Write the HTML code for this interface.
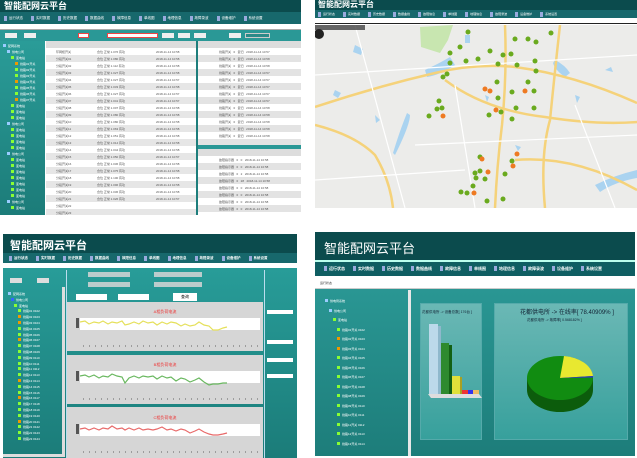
<!DOCTYPE html>
<html><head><meta charset="utf-8">
<style>
*{margin:0;padding:0;box-sizing:border-box}
body{width:637px;height:458px;background:#fff;position:relative;overflow:hidden;font-family:"Liberation Sans","Noto Sans CJK SC",sans-serif}
.a{position:absolute}
.hd{background:#0b4b4d;color:#fff;font-weight:bold;white-space:nowrap}
.nav{background:#17686c;color:#fff;white-space:nowrap;overflow:hidden}
.nav span{display:inline-block;margin-right:8px}
.nav span:before{content:"";display:inline-block;width:3px;height:5px;background:#9ad;margin-right:2px;vertical-align:middle}
.t{font-size:3px;color:#333;white-space:nowrap}
.tree{background:linear-gradient(#2a9c98,#1c7c79)}
.rows{background:repeating-linear-gradient(#fff 0 7px,#e6e6e6 7px 14px)}
.rows2{background:repeating-linear-gradient(#fff 0 7px,#e3e3e3 7px 14px)}
.leaf{font-size:3px;color:#fff;white-space:nowrap;line-height:inherit}
.leaf i{display:inline-block;width:3px;height:3px;background:#8f3;margin-right:2px}
.leaf i.o{background:#e90}
</style></head><body>

<!-- Q1 -->
<div class="a hd" style="left:0;top:0;width:301px;height:12px;font-size:9px;padding-left:4px;line-height:12px">智能配网云平台</div>
<div class="a nav" style="left:0;top:12px;width:301px;height:12px;font-size:3.5px;line-height:12px;padding-left:4px"><span>运行状态</span><span>实时数据</span><span>历史数据</span><span>数据曲线</span><span>故障信息</span><span>单线图</span><span>地理信息</span><span>故障录波</span><span>设备维护</span><span>系统设置</span></div>
<div class="a" style="left:0;top:24px;width:301px;height:6px;background:#fff;border-bottom:1px solid #aaa"></div>
<div class="a" style="left:0;top:30px;width:301px;height:11px;background:#2a9896"></div>
<div class="a" style="left:5px;top:33px;width:12px;height:5px;background:#eee"></div>
<div class="a" style="left:24px;top:33px;width:12px;height:5px;background:#eee"></div>
<div class="a" style="left:78px;top:33px;width:11px;height:5px;background:#fff;border:1px solid #e44"></div>
<div class="a" style="left:107px;top:33px;width:51px;height:5px;background:#fff;border:1px solid #e44"></div>
<div class="a" style="left:162px;top:33px;width:12px;height:5px;background:#eee"></div>
<div class="a" style="left:178px;top:33px;width:12px;height:5px;background:#eee"></div>
<div class="a" style="left:194px;top:33px;width:12px;height:5px;background:#eee"></div>
<div class="a" style="left:229px;top:33px;width:12px;height:5px;background:#eee"></div>
<div class="a" style="left:245px;top:33px;width:25px;height:5px;background:#2a8a88;border:1px solid #ccc"></div>
<div class="a tree" style="left:0;top:41px;width:45px;height:174px;padding:2px 0 0 3px;line-height:6px;overflow:hidden">
<div class="leaf"><i style="background:#9cf"></i>配网系统</div>
<div class="leaf" style="padding-left:4px"><i style="background:#9cf"></i>供电公司</div>
<div class="leaf" style="padding-left:8px"><i></i>变电站</div>
<div class="leaf" style="padding-left:12px"><i class="o"></i>线路01开关</div>
<div class="leaf" style="padding-left:12px"><i></i>线路02开关</div>
<div class="leaf" style="padding-left:12px"><i></i>线路03开关</div>
<div class="leaf" style="padding-left:12px"><i class="o"></i>线路04开关</div>
<div class="leaf" style="padding-left:12px"><i></i>线路05开关</div>
<div class="leaf" style="padding-left:12px"><i></i>线路06开关</div>
<div class="leaf" style="padding-left:12px"><i class="o"></i>线路07开关</div>
<div class="leaf" style="padding-left:8px"><i></i>变电站</div>
<div class="leaf" style="padding-left:8px"><i></i>变电站</div>
<div class="leaf" style="padding-left:8px"><i></i>变电站</div>
<div class="leaf" style="padding-left:4px"><i style="background:#9cf"></i>供电公司</div>
<div class="leaf" style="padding-left:8px"><i></i>变电站</div>
<div class="leaf" style="padding-left:8px"><i></i>变电站</div>
<div class="leaf" style="padding-left:8px"><i></i>变电站</div>
<div class="leaf" style="padding-left:8px"><i></i>变电站</div>
<div class="leaf" style="padding-left:4px"><i style="background:#9cf"></i>供电公司</div>
<div class="leaf" style="padding-left:8px"><i></i>变电站</div>
<div class="leaf" style="padding-left:8px"><i></i>变电站</div>
<div class="leaf" style="padding-left:8px"><i></i>变电站</div>
<div class="leaf" style="padding-left:8px"><i></i>变电站</div>
<div class="leaf" style="padding-left:8px"><i></i>变电站</div>
<div class="leaf" style="padding-left:8px"><i></i>变电站</div>
<div class="leaf" style="padding-left:8px"><i></i>变电站</div>
<div class="leaf" style="padding-left:4px"><i style="background:#9cf"></i>供电公司</div>
<div class="leaf" style="padding-left:8px"><i></i>变电站</div>
</div>
<div class="a rows" style="left:46px;top:41px;width:150px;height:174px;border-top:7px solid #ddd"></div>
<div class="a t" style="left:56px;top:49px;line-height:7px;color:#555">环网柜开关<br>分段开关01<br>分段开关02<br>分段开关03<br>分段开关04<br>分段开关05<br>分段开关06<br>分段开关07<br>分段开关08<br>分段开关09<br>分段开关10<br>分段开关11<br>分段开关12<br>分段开关13<br>分段开关14<br>分段开关15<br>分段开关16<br>分段开关17<br>分段开关18<br>分段开关19<br>分段开关20<br>分段开关21<br>分段开关22<br>分段开关23</div>
<div class="a t" style="left:97px;top:49px;line-height:7px;color:#555">合位 正常 1.076 有功<br>合位 正常 1.080 有功<br>合位 正常 1.112 有功<br>合位 正常 1.027 有功<br>合位 正常 1.027 有功<br>合位 正常 1.033 有功<br>合位 正常 1.027 有功<br>合位 正常 1.041 有功<br>合位 正常 1.007 有功<br>合位 正常 1.080 有功<br>合位 正常 1.080 有功<br>合位 正常 1.063 有功<br>合位 正常 1.051 有功<br>合位 正常 1.014 有功<br>合位 正常 1.044 有功<br>合位 正常 1.050 有功<br>合位 正常 1.036 有功<br>合位 正常 1.075 有功<br>合位 正常 1.100 有功<br>合位 正常 1.096 有功<br>合位 正常 1.036 有功<br>合位 正常 1.026 有功</div>
<div class="a t" style="left:156px;top:49px;line-height:7px;color:#555">2018-11-14 10:58<br>2018-11-14 10:58<br>2018-11-14 10:58<br>2018-11-14 10:58<br>2018-11-14 10:57<br>2018-11-14 10:58<br>2018-11-14 10:57<br>2018-11-14 10:57<br>2018-11-14 10:58<br>2018-11-14 10:58<br>2018-11-14 10:58<br>2018-11-14 10:58<br>2018-11-14 10:58<br>2018-11-14 10:58<br>2018-11-14 10:58<br>2018-11-14 10:57<br>2018-11-14 10:58<br>2018-11-14 10:58<br>2018-11-14 10:58<br>2018-11-14 10:58<br>2018-11-14 10:58<br>2018-11-14 10:57</div>
<div class="a" style="left:196px;top:41px;width:2px;height:174px;background:#1e7e7c"></div>
<div class="a rows2" style="left:198px;top:41px;width:103px;height:104px;border-top:7px solid #ddd"></div>
<div class="a" style="left:198px;top:145px;width:103px;height:4px;background:#2a9896"></div>
<div class="a rows2" style="left:198px;top:149px;width:103px;height:66px;border-top:7px solid #ddd"></div>
<div class="a t" style="left:219px;top:49px;line-height:7px;color:#555">线路开关 &nbsp; 0 &nbsp; 复归 &nbsp; 2018-11-14 10:57<br>线路开关 &nbsp; 0 &nbsp; 复归 &nbsp; 2018-11-14 10:58<br>线路开关 &nbsp; 0 &nbsp; 复归 &nbsp; 2018-11-14 10:58<br>线路开关 &nbsp; 0 &nbsp; 复归 &nbsp; 2018-11-14 10:57<br>线路开关 &nbsp; 0 &nbsp; 复归 &nbsp; 2018-11-14 10:57<br>线路开关 &nbsp; 0 &nbsp; 复归 &nbsp; 2018-11-14 10:57<br>线路开关 &nbsp; 0 &nbsp; 复归 &nbsp; 2018-11-14 10:57<br>线路开关 &nbsp; 0 &nbsp; 复归 &nbsp; 2018-11-14 10:57<br>线路开关 &nbsp; 0 &nbsp; 复归 &nbsp; 2018-11-14 10:58<br>线路开关 &nbsp; 0 &nbsp; 复归 &nbsp; 2018-11-14 10:58<br>线路开关 &nbsp; 0 &nbsp; 复归 &nbsp; 2018-11-14 10:58<br>线路开关 &nbsp; 0 &nbsp; 复归 &nbsp; 2018-11-14 10:58<br>线路开关 &nbsp; 0 &nbsp; 复归 &nbsp; 2018-11-14 10:58</div>
<div class="a t" style="left:219px;top:157px;line-height:7px;color:#555">故障指示器 &nbsp; 0 &nbsp; 0 &nbsp; 2018-11-14 10:58<br>故障指示器 &nbsp; 0 &nbsp; 0 &nbsp; 2018-11-14 10:58<br>故障指示器 &nbsp; 0 &nbsp; 2 &nbsp; 2018-11-14 10:58<br>故障指示器 &nbsp; 0 &nbsp; 28 &nbsp; 2018-11-14 10:58<br>故障指示器 &nbsp; 0 &nbsp; 0 &nbsp; 2018-11-14 10:58<br>故障指示器 &nbsp; 0 &nbsp; 0 &nbsp; 2018-11-14 10:58<br>故障指示器 &nbsp; 0 &nbsp; 0 &nbsp; 2018-11-14 10:58<br>故障指示器 &nbsp; 0 &nbsp; 0 &nbsp; 2018-11-14 10:58</div>

<!-- Q2 map -->
<div class="a hd" style="left:315px;top:0;width:322px;height:10px;font-size:8px;padding-left:3px;line-height:10px">智能配网云平台</div>
<div class="a nav" style="left:315px;top:10px;width:322px;height:8px;font-size:3px;line-height:8px;padding-left:3px"><span>运行状态</span><span>实时数据</span><span>历史数据</span><span>数据曲线</span><span>故障信息</span><span>单线图</span><span>地理信息</span><span>故障录波</span><span>设备维护</span><span>系统设置</span></div>
<div class="a" style="left:315px;top:18px;width:322px;height:6px;background:#fff;border-bottom:1px solid #222"></div>
<svg class="a" style="left:315px;top:25px" width="322" height="183" viewBox="0 0 322 183">
<rect width="322" height="183" fill="#ececea"/>
<path d="M105 2 L138 0 L133 15 L125 28 L106 22Z" fill="#c8e6b0"/>
<path d="M110 45 Q125 38 135 32 L140 40 Q125 50 112 52Z" fill="#aad3f0"/>
<path d="M240 35 Q250 40 255 48 L250 52 Q240 45 238 38Z" fill="#aad3f0"/>
<path d="M80 130 Q95 100 95 90 L92 88 Q85 105 78 128Z" fill="#aad3f0"/>
<path d="M280 160 Q300 150 322 145 L322 153 Q300 157 285 167Z" fill="#aad3f0"/>
<path d="M40 20 l8 4 -2 6 -8 -3z M20 65 l6 3 -3 5 -5 -3z M150 10 l5 0 0 8 -5 0z M60 90 l5 5 -4 3z M200 120 l6 2 -3 4z M170 70 l4 2 -2 5z M260 70 l5 2 -3 6z M290 45 l6 -3 2 5z" fill="#aad3f0"/>
<g fill="none" stroke="#f5d27a" stroke-width="2.5">
<path d="M0 82 Q60 62 120 48 Q160 38 200 42 Q260 50 322 78"/>
<path d="M245 0 Q240 45 235 95 Q225 130 230 183"/>
<path d="M190 0 Q192 50 187 100 Q182 140 180 183"/>
<path d="M0 100 Q40 110 60 130 Q75 155 78 183"/>
<path d="M200 135 Q260 130 322 165"/>
<path d="M130 55 Q170 85 230 92 Q280 100 322 97"/>
</g>
<g fill="none" stroke="#fff" stroke-width="1.2">
<path d="M0 50 L322 30 M40 0 L90 183 M140 60 L160 183 M260 80 L300 183 M100 120 L322 110 M0 155 L150 145"/>
</g>
<g fill="#6aaa1e">
<circle cx="153" cy="7" r="2.5"/><circle cx="200" cy="14" r="2.5"/><circle cx="213" cy="14" r="2.5"/><circle cx="221" cy="17" r="2.5"/><circle cx="236" cy="8" r="2.5"/><circle cx="145" cy="22" r="2.5"/><circle cx="175" cy="26" r="2.5"/><circle cx="135" cy="28" r="2.5"/><circle cx="188" cy="30" r="2.5"/><circle cx="196" cy="29" r="2.5"/><circle cx="151" cy="36" r="2.5"/><circle cx="163" cy="34" r="2.5"/><circle cx="183" cy="39" r="2.5"/><circle cx="202" cy="40" r="2.5"/><circle cx="220" cy="36" r="2.5"/><circle cx="221" cy="46" r="2.5"/><circle cx="135" cy="38" r="2.5"/><circle cx="128" cy="52" r="2.5"/><circle cx="132" cy="49" r="2.5"/><circle cx="182" cy="57" r="2.5"/><circle cx="213" cy="57" r="2.5"/><circle cx="197" cy="67" r="2.5"/><circle cx="219" cy="66" r="2.5"/><circle cx="183" cy="73" r="2.5"/><circle cx="124" cy="76" r="2.5"/><circle cx="122" cy="84" r="2.5"/><circle cx="127" cy="83" r="2.5"/><circle cx="114" cy="91" r="2.5"/><circle cx="174" cy="90" r="2.5"/><circle cx="186" cy="87" r="2.5"/><circle cx="201" cy="83" r="2.5"/><circle cx="219" cy="83" r="2.5"/><circle cx="197" cy="94" r="2.5"/><circle cx="165" cy="132" r="2.5"/><circle cx="197" cy="136" r="2.5"/><circle cx="160" cy="148" r="2.5"/><circle cx="165" cy="146" r="2.5"/><circle cx="190" cy="149" r="2.5"/><circle cx="161" cy="153" r="2.5"/><circle cx="146" cy="167" r="2.5"/><circle cx="152" cy="168" r="2.5"/><circle cx="158" cy="161" r="2.5"/><circle cx="172" cy="176" r="2.5"/><circle cx="188" cy="174" r="2.5"/><circle cx="170" cy="154" r="2.5"/>
</g>
<g fill="#ee7a22">
<circle cx="170" cy="64" r="2.5"/><circle cx="175" cy="66" r="2.5"/><circle cx="210" cy="66" r="2.5"/><circle cx="181" cy="85" r="2.5"/><circle cx="128" cy="91" r="2.5"/><circle cx="202" cy="129" r="2.5"/><circle cx="167" cy="134" r="2.5"/><circle cx="198" cy="141" r="2.5"/><circle cx="173" cy="147" r="2.5"/><circle cx="159" cy="168" r="2.5"/>
</g>
<rect x="0" y="0" width="50" height="5" fill="#444" opacity=".8"/>
<circle cx="4" cy="9" r="5" fill="#222"/>
</svg>

<!-- Q3 -->
<div class="a" style="left:3px;top:234px;width:294px;height:224px;background:linear-gradient(#2aa29e,#1b7c79)"></div>
<div class="a hd" style="left:3px;top:234px;width:294px;height:19px;font-size:11px;padding-left:7px;line-height:24px">智能配网云平台</div>
<div class="a nav" style="left:3px;top:253px;width:294px;height:10px;font-size:3.5px;line-height:10px;padding-left:6px;font-weight:bold"><span>运行状态</span><span>实时数据</span><span>历史数据</span><span>数据曲线</span><span>故障信息</span><span>单线图</span><span>地理信息</span><span>故障录波</span><span>设备维护</span><span>系统设置</span></div>
<div class="a" style="left:3px;top:263px;width:294px;height:5px;background:#fff"></div>
<div class="a" style="left:10px;top:278px;width:12px;height:5px;background:#ddd"></div>
<div class="a" style="left:37px;top:278px;width:12px;height:5px;background:#ddd"></div>
<div class="a" style="left:62px;top:287px;width:3px;height:168px;background:#ddd"></div>
<div class="a" style="left:3px;top:454px;width:62px;height:3px;background:#ddd"></div>
<div class="a" style="left:8px;top:292px;line-height:5.8px;width:54px;height:160px;overflow:hidden">
<div class="leaf"><i style="background:#9cf"></i>配网系统</div>
<div class="leaf" style="padding-left:3px"><i style="background:#36f"></i>供电公司</div>
<div class="leaf" style="padding-left:6px"><i></i>变电站</div>
<div class="leaf" style="padding-left:10px"><i></i>线路01 0102</div><div class="leaf" style="padding-left:10px"><i class="o"></i>线路02 0103</div><div class="leaf" style="padding-left:10px"><i class="o"></i>线路03 0104</div><div class="leaf" style="padding-left:10px"><i></i>线路04 0105</div><div class="leaf" style="padding-left:10px"><i></i>线路05 0106</div><div class="leaf" style="padding-left:10px"><i class="o"></i>线路06 0107</div><div class="leaf" style="padding-left:10px"><i></i>线路07 0108</div><div class="leaf" style="padding-left:10px"><i></i>线路08 0109</div><div class="leaf" style="padding-left:10px"><i></i>线路09 0110</div><div class="leaf" style="padding-left:10px"><i></i>线路10 0111</div><div class="leaf" style="padding-left:10px"><i></i>线路11 0112</div><div class="leaf" style="padding-left:10px"><i></i>线路12 0113</div><div class="leaf" style="padding-left:10px"><i class="o"></i>线路13 0114</div><div class="leaf" style="padding-left:10px"><i></i>线路14 0115</div><div class="leaf" style="padding-left:10px"><i></i>线路15 0116</div><div class="leaf" style="padding-left:10px"><i class="o"></i>线路16 0117</div><div class="leaf" style="padding-left:10px"><i></i>线路17 0118</div><div class="leaf" style="padding-left:10px"><i></i>线路18 0119</div><div class="leaf" style="padding-left:10px"><i></i>线路19 0120</div><div class="leaf" style="padding-left:10px"><i class="o"></i>线路20 0121</div><div class="leaf" style="padding-left:10px"><i></i>线路21 0122</div><div class="leaf" style="padding-left:10px"><i></i>线路22 0123</div><div class="leaf" style="padding-left:10px"><i></i>线路23 0124</div>
</div>
<div class="a" style="left:66px;top:270px;width:1px;height:188px;background:#bde"></div>
<div class="a" style="left:264px;top:270px;width:1px;height:188px;background:#bde"></div>
<div class="a" style="left:88px;top:272px;width:42px;height:5px;background:#bcc"></div>
<div class="a" style="left:154px;top:272px;width:48px;height:5px;background:#bcc"></div>
<div class="a" style="left:88px;top:282px;width:42px;height:5px;background:#bcc"></div>
<div class="a" style="left:154px;top:282px;width:48px;height:5px;background:#bcc"></div>
<div class="a" style="left:76px;top:294px;width:31px;height:6px;background:#fff"></div>
<div class="a" style="left:118px;top:294px;width:31px;height:6px;background:#fff"></div>
<div class="a" style="left:173px;top:293px;width:24px;height:8px;background:#fff;font-size:4px;text-align:center;line-height:8px">查询</div>
<div class="a" style="left:267px;top:310px;width:26px;height:4px;background:#fff"></div>
<div class="a" style="left:267px;top:340px;width:26px;height:4px;background:#fff"></div>
<div class="a" style="left:267px;top:358px;width:26px;height:4px;background:#fff"></div>
<div class="a" style="left:267px;top:374px;width:26px;height:4px;background:#fff"></div>
<svg class="a" style="left:67px;top:302px" width="196" height="156" viewBox="0 0 196 156">
<g fill="#d6d6d6"><rect y="0" width="196" height="49"/><rect y="53" width="196" height="49"/><rect y="105" width="196" height="51"/></g>
<g fill="#fff"><rect x="13" y="16" width="180" height="12"/><rect x="13" y="69" width="180" height="12"/><rect x="13" y="122" width="180" height="12"/></g>
<g fill="#555"><rect x="9" y="16" width="3" height="10"/><rect x="9" y="69" width="3" height="10"/><rect x="9" y="122" width="3" height="10"/></g>
<g font-size="4" fill="#e33" text-anchor="middle" font-family="Liberation Sans,Noto Sans CJK SC,sans-serif"><text x="98" y="11">A相负荷电流</text><text x="98" y="64">B相负荷电流</text><text x="98" y="117">C相负荷电流</text></g>
<path d="M13 20 l5 -1 4 3 5 -2 5 1 4 -2 5 3 4 -2 5 1 5 -2 3 4 4 -1 5 -2 5 2 4 -3 5 2 5 -1 4 3 5 -3 5 2 4 -2 5 1 5 3 4 -2 5 2 5 -1 4 -3 5 3 5 1 4 4 5 0 5 -2 4 -1" fill="none" stroke="#e5e05a" stroke-width="1.2"/>
<path d="M13 74 l5 -1 4 2 5 -2 5 3 4 -2 5 1 4 -3 5 2 5 1 3 6 4 -5 5 -2 5 2 4 -2 5 1 5 -1 4 3 5 -3 5 2 4 -1 5 4 5 -3 4 1 5 3 5 -2 4 -2 5 4 5 3 4 -1 5 0 5 -1 4 0" fill="none" stroke="#6ab860" stroke-width="1.2"/>
<path d="M13 127 l5 -1 4 2 5 -2 5 2 4 -2 5 1 4 -3 5 3 5 -1 3 2 4 -2 5 2 5 -2 4 2 5 -1 5 1 4 -1 5 -2 5 3 4 -1 5 2 5 -2 4 1 5 3 5 -2 4 -2 5 3 5 2 4 1 5 0 5 -1 4 -1" fill="none" stroke="#e86a6a" stroke-width="1.2"/>
<g stroke="#888" stroke-width="1.5" stroke-dasharray="1 5"><line x1="16" y1="44" x2="196" y2="44"/><line x1="16" y1="97" x2="196" y2="97"/><line x1="16" y1="150" x2="196" y2="150"/></g>
</svg>

<!-- Q4 -->
<div class="a" style="left:315px;top:232px;width:320px;height:224px;background:linear-gradient(#2e9f9c,#1d7d7a)"></div>
<div class="a hd" style="left:315px;top:232px;width:320px;height:28px;font-size:13px;padding-left:9px;line-height:34px;font-weight:normal">智能配网云平台</div>
<div class="a" style="left:315px;top:260px;width:320px;height:2px;background:#bfe"></div>
<div class="a nav" style="left:315px;top:262px;width:320px;height:14px;font-size:4px;line-height:14px;padding-left:9px;background:#0f5e62;font-weight:bold"><span>运行状态</span><span>实时数据</span><span>历史数据</span><span>数据曲线</span><span>故障信息</span><span>单线图</span><span>地理信息</span><span>故障录波</span><span>设备维护</span><span>系统设置</span></div>
<div class="a" style="left:315px;top:276px;width:320px;height:13px;background:#fff;border-bottom:1px solid #ccc"><span class="t" style="position:absolute;left:5px;top:5px">运行状态</span></div>
<div class="a" style="left:408px;top:290px;width:3px;height:166px;background:#e8e8e8"></div>
<div class="a" style="left:325px;top:297px;line-height:9.5px">
<div class="leaf"><i style="background:#9cf"></i>供电局系统</div>
<div class="leaf" style="padding-left:4px"><i style="background:#9cf"></i>供电公司</div>
<div class="leaf" style="padding-left:8px"><i></i>变电站</div>
<div class="leaf" style="padding-left:12px"><i></i>线路01开关 0102</div><div class="leaf" style="padding-left:12px"><i class="o"></i>线路02开关 0103</div><div class="leaf" style="padding-left:12px"><i class="o"></i>线路03开关 0104</div><div class="leaf" style="padding-left:12px"><i></i>线路04开关 0105</div><div class="leaf" style="padding-left:12px"><i></i>线路05开关 0106</div><div class="leaf" style="padding-left:12px"><i></i>线路06开关 0107</div><div class="leaf" style="padding-left:12px"><i></i>线路07开关 0108</div><div class="leaf" style="padding-left:12px"><i></i>线路08开关 0109</div><div class="leaf" style="padding-left:12px"><i></i>线路09开关 0110</div><div class="leaf" style="padding-left:12px"><i></i>线路10开关 0111</div><div class="leaf" style="padding-left:12px"><i></i>线路11开关 0112</div><div class="leaf" style="padding-left:12px"><i></i>线路12开关 0113</div><div class="leaf" style="padding-left:12px"><i></i>线路13开关 0114</div>
</div>
<div class="a" style="left:420px;top:303px;width:62px;height:137px;background:linear-gradient(#6bb8b5,#37a09c);border:1px solid #5aa"></div>
<div class="a" style="left:494px;top:303px;width:134px;height:137px;background:linear-gradient(#6bb8b5,#37a09c);border:1px solid #5aa"></div>
<div class="a" style="left:422px;top:310px;font-size:3.5px;color:#123;white-space:nowrap">花都供电所 -> 设备总数[ 176台 ]</div>
<div class="a" style="left:520px;top:307px;font-size:6px;color:#123;white-space:nowrap">花都供电所 -> 在线率[ 78.40909% ]</div>
<div class="a" style="left:527px;top:318px;font-size:3.5px;color:#123;white-space:nowrap">花都供电所 -> 故障率[ 0.568182% ]</div>
<svg class="a" style="left:420px;top:318px" width="62" height="90" viewBox="0 0 62 90">
<rect x="9" y="6" width="9" height="70" fill="#bcd9ea"/><rect x="18" y="8" width="3" height="68" fill="#8fb8cc"/>
<rect x="21" y="25" width="8" height="51" fill="#2e8a2e"/><rect x="29" y="27" width="3" height="49" fill="#136013"/>
<rect x="32" y="58" width="8" height="18" fill="#e0e03a"/><rect x="40" y="59" width="2" height="17" fill="#aaa020"/>
<rect x="42" y="72" width="6" height="4" fill="#e33"/><rect x="48" y="72" width="5" height="4" fill="#33e"/><rect x="53" y="72" width="6" height="4" fill="#eb6"/>
<path d="M8 76 L59 76 L62 80 L11 80Z" fill="#ddd"/>
</svg>
<svg class="a" style="left:506px;top:350px" width="90" height="70" viewBox="0 0 90 70">
<path d="M21 28 v12 a33 22 0 0 0 66 0 v-12z" fill="#0c5c0c"/>
<ellipse cx="54" cy="28" rx="33" ry="22" fill="#118c11"/>
<path d="M54 28 L58 6 A33 22 0 0 1 87 26Z" fill="#e8e830"/>
<path d="M54 28 L87 26 L87 27.5Z" fill="#33c"/>
</svg>
</body></html>
